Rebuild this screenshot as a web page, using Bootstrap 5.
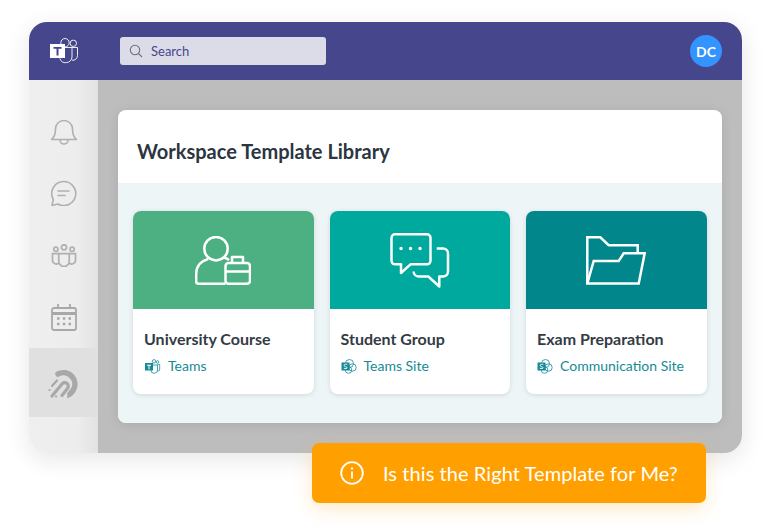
<!DOCTYPE html>
<html lang="en">
<head>
    <meta charset="UTF-8">
    <meta name="viewport" content="width=device-width, initial-scale=1.0">
    <title>Workspace Template Library</title>
    <link href="https://cdn.jsdelivr.net/npm/bootstrap@5.3.0/dist/css/bootstrap.min.css" rel="stylesheet">
    <style>
        body {
            background: #fff;
            font-family: Lato, "Liberation Sans", sans-serif;
            overflow: hidden;
        }
        .stage {
            width: 771px;
            height: 529px;
            padding: 22px 29px 0;
            position: relative;
        }
        .app-window {
            width: 713px;
            height: 431px;
            border-radius: 18px;
            overflow: hidden;
            box-shadow: 0 6px 24px rgba(0,0,0,0.10);
        }
        .app-head {
            height: 58px;
            background: #46468c;
            padding: 0 20px 0 21px;
        }
        .team-logo { width: 28px; height: 26px; }
        .search-box {
            width: 206px;
            height: 28px;
            margin-left: 42px;
            background: #dcdce8;
            border-radius: 3px;
            padding-left: 9px;
            color: #46468c;
            font-size: 13px;
            gap: 8px;
        }
        .search-box span { padding-top: 1px; }
        .avatar {
            width: 32px;
            height: 32px;
            background: #3393ff;
            color: #fff;
            font-size: 14px;
            font-weight: 700;
        }
        .side-rail {
            width: 69px;
            padding-top: 20px;
            background: linear-gradient(to right, #efefef 0%, #ededed 70%, #e2e2e2 100%);
        }
        .rail-item { height: 62px; }
        .rail-item.is-active { height: 69px; background: #e0e0e0; }
        .main-area {
            background: #bdbdbd;
            padding: 30px 20px;
        }
        .lib-panel {
            width: 604px;
            height: 313px;
            border-radius: 8px;
            overflow: hidden;
            box-shadow: 0 2px 12px rgba(0,0,0,0.10);
        }
        .lib-title {
            height: 73px;
            padding: 29px 19px 0;
            margin: 0;
            font-size: 20px;
            font-weight: 700;
            color: #2b3640;
            line-height: 24px;
        }
        .lib-body {
            height: 240px;
            background: #eef5f7;
            padding: 28px 15px 0;
            gap: 16px;
        }
        .tpl-card {
            width: 180.5px;
            height: 183px;
            border: 0;
            border-radius: 8px;
            overflow: hidden;
            box-shadow: 0 1px 5px rgba(0,0,0,0.12);
        }
        .tpl-art { height: 98px; }
        .art-green { background: #4cb082; }
        .art-teal { background: #00a99d; }
        .art-deep { background: #00868b; }
        .tpl-name {
            margin: 20px 0 0 11px;
            font-size: 16px;
            font-weight: 700;
            color: #333b44;
            line-height: 20px;
        }
        .tpl-kind {
            margin: 7px 0 0 11px;
            font-size: 14px;
            color: #168a96;
            line-height: 20px;
            gap: 7px;
        }
        .kind-icon { width: 16px; height: 15px; }
        .kind-teams { width: 17px; }
        .help-toast {
            position: absolute;
            left: 312px;
            top: 443px;
            width: 394px;
            height: 60px;
            padding-left: 28px;
            background: #ffa000;
            border-radius: 7px;
            color: #fff;
            font-size: 20px;
            letter-spacing: .07px;
            gap: 19px;
            box-shadow: 0 6px 18px rgba(255,160,0,0.22);
        }
    </style>
</head>
<body>
    <svg width="0" height="0" class="position-absolute">
        <symbol id="teams-mini" viewBox="0 0 16 15">
            <g fill="none" stroke="#168a96" stroke-width="0.8">
                <circle cx="9.5" cy="2.3" r="1.7"/>
                <circle cx="13" cy="3" r="1.3"/>
                <path d="M6 6h7v5a3.3 3.3 0 0 1-6.600 0"/>
                <path d="M13 5.500h2.200v4.500a2.200 2.200 0 0 1-2.200 2.200"/>
            </g>
            <rect x="0.500" y="4" width="8" height="7.500" fill="#168a96"/>
            <path d="M2.500 5.800h4v1h-1.500v3.800h-1v-3.800h-1.500z" fill="#fff"/>
        </symbol>
        <symbol id="sharepoint-mini" viewBox="0 0 16 15">
            <g fill="none" stroke="#168a96" stroke-width="0.8">
                <circle cx="8.500" cy="4.500" r="4"/>
                <circle cx="11.500" cy="8.500" r="3.700"/>
                <circle cx="7.500" cy="11" r="3.300"/>
            </g>
            <rect x="0.500" y="3.500" width="8" height="8" fill="#168a96"/>
            <path d="M6.300 5.500c-1.500-.6-3.200-.3-3.200 1 0 1.500 3 1 3 2.300 0 .9-1.700 1-3.300.4" fill="none" stroke="#fff" stroke-width="0.900"/>
        </symbol>
    </svg>

    <div class="stage">
        <div class="app-window d-flex flex-column bg-white">
            <div class="app-head d-flex align-items-center flex-shrink-0">
                <svg class="team-logo flex-shrink-0" viewBox="0 0 28 26">
                    <g fill="none" stroke="#fff" stroke-width="0.900">
                        <circle cx="15" cy="4.700" r="4.200"/>
                        <circle cx="23.300" cy="5.300" r="3.200"/>
                        <path d="M10 9.500h12v9.500a6.300 6.300 0 0 1-12.200 1.500"/>
                        <path d="M22 9.500h5.500v8a4.700 4.700 0 0 1-5.500 4.700"/>
                    </g>
                    <rect x="0" y="6" width="15" height="14" fill="#fff"/>
                    <path d="M3.500 9h8v1.700h-3v6.800h-2v-6.800h-3z" fill="#46468c"/>
                </svg>
                <div class="search-box d-flex align-items-center">
                    <svg width="14" height="14" viewBox="0 0 14 14" fill="none" stroke="#6f6f80" stroke-width="1.100">
                        <circle cx="6" cy="6" r="4.700"/>
                        <path d="M9.500 9.500l3.500 3.500"/>
                    </svg>
                    <span>Search</span>
                </div>
                <div class="avatar rounded-circle d-flex align-items-center justify-content-center ms-auto">DC</div>
            </div>
            <div class="d-flex flex-grow-1">
                <div class="side-rail flex-shrink-0">
                    <div class="rail-item d-flex align-items-center justify-content-center">
                        <svg width="28" height="30" viewBox="0 0 28 30" fill="none" stroke="#b0b0b0" stroke-width="1.600" stroke-linejoin="round">
                            <path d="M1.500 23.500c3-2.500 4-5 4-10.500a8.500 8.500 0 0 1 17 0c0 5.500 1 8 4 10.500z"/>
                            <path d="M10 24a4 4 0 0 0 8 0"/>
                        </svg>
                    </div>
                    <div class="rail-item d-flex align-items-center justify-content-center">
                        <svg width="26" height="26" viewBox="0 0 26 26" fill="none" stroke="#b0b0b0" stroke-width="1.600" stroke-linecap="round">
                            <path d="M1 25.500l1.300-6a12 12 0 1 1 4.500 4.500z" stroke-linejoin="round"/>
                            <path d="M7 11h11M7 15.500h7"/>
                        </svg>
                    </div>
                    <div class="rail-item d-flex align-items-center justify-content-center">
                        <svg width="26" height="23" viewBox="0 0 26 24" fill="none" stroke="#b0b0b0" stroke-width="1.800">
                            <circle cx="13" cy="3.500" r="2.700"/>
                            <circle cx="4.500" cy="5.500" r="2.200"/>
                            <circle cx="21.500" cy="5.500" r="2.200"/>
                            <path d="M7.500 10h11v8a5.500 5.500 0 0 1-11 0z"/>
                            <path d="M7.500 10H1v7a4 4 0 0 0 7 2.500"/>
                            <path d="M18.500 10H25v7a4 4 0 0 1-7 2.500"/>
                        </svg>
                    </div>
                    <div class="rail-item d-flex align-items-center justify-content-center">
                        <svg width="26" height="27" viewBox="0 0 26 27" fill="none" stroke="#a8a8a8" stroke-width="1.800">
                            <rect x="1" y="4" width="24" height="22" rx="2"/>
                            <path d="M7 0v4M19 0v4"/>
                            <path d="M1 9.500h24" stroke-width="3"/>
                            <path d="M6 14.500h2.500M11.800 14.500h2.500M17.500 14.500h2.500M6 20h2.500M11.800 20h2.500M17.500 20h2.500" stroke-width="2.400"/>
                        </svg>
                    </div>
                    <div class="rail-item is-active d-flex align-items-center justify-content-center">
                        <svg width="32" height="32" viewBox="0 0 32 32" fill="none" stroke="#a8a8a8" stroke-linecap="round">
                            <path d="M10 7A11.500 11.500 0 0 1 25 23.500L22 27" stroke-width="5.500"/>
                            <path d="M4 29L14 17a3.500 3.500 0 0 1 5.500 4.500L14 28.500" stroke-width="3.200"/>
                            <path d="M4 19l5-5.500M1.500 23h.1M8 29.500h.1M20 30l1-1" stroke-width="2.200"/>
                        </svg>
                    </div>
                </div>
                <div class="main-area flex-grow-1">
                    <div class="lib-panel bg-white">
                        <h1 class="lib-title">Workspace Template Library</h1>
                        <div class="lib-body d-flex">
                            <div class="card tpl-card flex-shrink-0">
                                <div class="tpl-art art-green d-flex align-items-center justify-content-center">
                                    <svg width="56" height="49" viewBox="0 0 56 49" fill="none" stroke="#fff" stroke-width="2.500" stroke-linejoin="round">
                                        <circle cx="21" cy="12.700" r="11.700"/>
                                        <path d="M30.500 47.700H3.500a2.300 2.300 0 0 1-2.300-2.300V38c0-9 6-13.500 12-15"/>
                                        <path d="M29 21.500c2 .5 3.800 1.400 5 2.500"/>
                                        <rect x="30.500" y="27" width="24.500" height="20.700" rx="3"/>
                                        <path d="M37 27v-6h11v6M30.500 35.500h24.500"/>
                                    </svg>
                                </div>
                                <div class="tpl-name">University Course</div>
                                <div class="tpl-kind d-flex align-items-center">
                                    <svg class="kind-icon kind-teams"><use href="#teams-mini"/></svg>
                                    <span>Teams</span>
                                </div>
                            </div>
                            <div class="card tpl-card flex-shrink-0">
                                <div class="tpl-art art-teal d-flex align-items-center justify-content-center">
                                    <svg width="60" height="55" viewBox="0 0 60 55" fill="none" stroke="#fff" stroke-width="2.500" stroke-linejoin="round">
                                        <path d="M5 1.300h32a3.500 3.500 0 0 1 3.500 3.500v23a3.500 3.500 0 0 1-3.500 3.500H20.500L11 40v-8.700H5a3.500 3.500 0 0 1-3.500-3.500v-23A3.500 3.500 0 0 1 5 1.300z"/>
                                        <path d="M46.700 15.500H53a5 5 0 0 1 5 5V38.500a5 5 0 0 1-5 5H49.300v10L38.300 43.500H29a5.500 5.500 0 0 1-5.500-5"/>
                                        <path d="M11 15.500h.1M20.500 15.500h.1M30 15.500h.1" stroke-width="3.400" stroke-linecap="round"/>
                                    </svg>
                                </div>
                                <div class="tpl-name">Student Group</div>
                                <div class="tpl-kind d-flex align-items-center">
                                    <svg class="kind-icon"><use href="#sharepoint-mini"/></svg>
                                    <span>Teams Site</span>
                                </div>
                            </div>
                            <div class="card tpl-card flex-shrink-0">
                                <div class="tpl-art art-deep d-flex align-items-center justify-content-center">
                                    <svg width="60" height="49" viewBox="0 0 60 49" fill="none" stroke="#fff" stroke-width="2.500">
                                        <path d="M1.300 47.500V1.300h13l8.400 7.900h29v8"/>
                                        <path d="M1.300 47.500h51.400l6-30.200H37.700l-5 7.700h-25z"/>
                                    </svg>
                                </div>
                                <div class="tpl-name">Exam Preparation</div>
                                <div class="tpl-kind d-flex align-items-center">
                                    <svg class="kind-icon"><use href="#sharepoint-mini"/></svg>
                                    <span>Communication Site</span>
                                </div>
                            </div>
                        </div>
                    </div>
                </div>
            </div>
        </div>
        <div class="help-toast d-flex align-items-center">
            <svg width="24" height="24" viewBox="0 0 24 24" fill="none" stroke="#fff" stroke-width="1.800">
                <circle cx="12" cy="12" r="10.800"/>
                <path d="M12 10.500v7M12 6.500v2"/>
            </svg>
            <span>Is this the Right Template for Me?</span>
        </div>
    </div>

    <script src="https://cdn.jsdelivr.net/npm/bootstrap@5.3.0/dist/js/bootstrap.bundle.min.js"></script>
</body>
</html>
